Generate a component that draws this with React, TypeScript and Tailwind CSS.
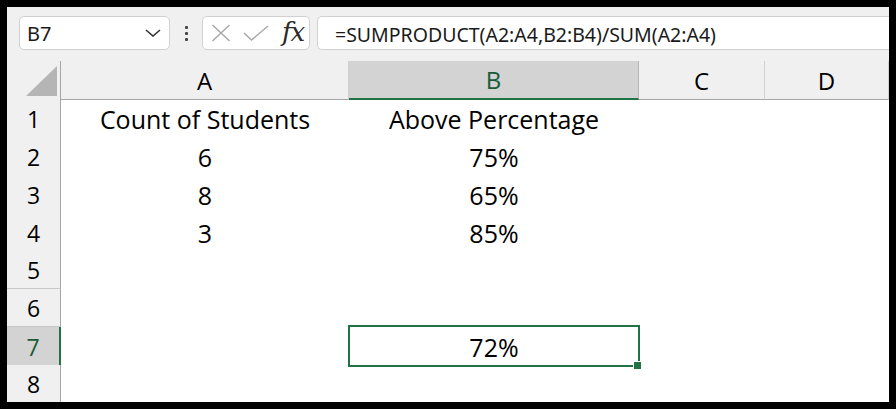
import React from "react"

const cols = ["A", "B", "C", "D"]

const rows: { a: string; b: string }[] = [
  { a: "Count of Students", b: "Above Percentage" },
  { a: "6", b: "75%" },
  { a: "8", b: "65%" },
  { a: "3", b: "85%" },
  { a: "", b: "" },
  { a: "", b: "" },
  { a: "", b: "72%" },
  { a: "", b: "" },
]

const gridCols = "grid grid-cols-[54px_288px_290px_126px_1fr]"

function Toolbar() {
  return (
    <div className="h-[54px] shrink-0 bg-[#f0f0f0] flex items-start pt-[9px] pl-[12px] gap-0 font-['Noto_Sans',sans-serif]">
      {/* name box */}
      <div className="w-[151px] h-[34px] bg-white border border-[#d1d1d1] rounded-[5px] flex items-center pl-[7px] pr-[7px] justify-between">
        <span className="text-[20px] leading-none text-[#1a1a1a] pt-[2px]">B7</span>
        <svg width="16" height="8" viewBox="0 0 16 8" className="mr-[1px]">
          <path d="M1 1 L8 7 L15 1" fill="none" stroke="#333" strokeWidth="1.6" />
        </svg>
      </div>

      {/* vertical dots */}
      <div className="w-[32px] h-[34px] flex flex-col items-center justify-center gap-[3px]">
        <span className="w-[3px] h-[3px] bg-[#444] rounded-[1px]" />
        <span className="w-[3px] h-[3px] bg-[#444] rounded-[1px]" />
        <span className="w-[3px] h-[3px] bg-[#444] rounded-[1px]" />
      </div>

      {/* cancel / enter / fx */}
      <div className="w-[108px] h-[34px] bg-white border border-[#d1d1d1] rounded-[5px] flex items-center pl-[8px]">
        <svg width="20" height="18" viewBox="0 0 20 18">
          <path d="M1.5 1 L18.5 17 M18.5 1 L1.5 17" fill="none" stroke="#a9a9a9" strokeWidth="1.5" />
        </svg>
        <svg width="26" height="16" viewBox="0 0 26 16" className="ml-[12px]">
          <path d="M1 8 L8.5 15 L25 1" fill="none" stroke="#a9a9a9" strokeWidth="1.5" />
        </svg>
        <span className="ml-[13px] text-[26px] leading-none italic text-[#2b2b2b] font-['DejaVu_Serif',serif] tracking-[-1px] -mt-[3px]">
          fx
        </span>
      </div>

      {/* formula */}
      <div className="ml-[7px] flex-1 h-[34px] bg-white border border-[#d1d1d1] border-r-0 rounded-l-[5px] flex items-center pl-[17px]">
        <span className="text-[19.5px] leading-none text-[#1a1a1a] pt-[3px]">
          =SUMPRODUCT(A2:A4,B2:B4)/SUM(A2:A4)
        </span>
      </div>
    </div>
  )
}

function HeaderRow() {
  return (
    <div className={`${gridCols} h-[38px] shrink-0 bg-[#f0f0f0]`}>
      <div className="border-r border-b border-[#a6a6a6] flex items-end justify-end pr-[3px] pb-[3px]">
        <svg width="31" height="30" viewBox="0 0 31 30">
          <polygon points="31,0 31,30 0,30" fill="#b5b5b5" />
        </svg>
      </div>
      {cols.map((c) => {
        const active = c === "B"
        return (
          <div
            key={c}
            className={
              active
                ? "bg-[#d3d3d3] border-r border-[#b5b5b5] border-b-2 border-b-[#217346] flex items-center justify-center text-[24px] text-[#185c37] pt-[1px]"
                : "border-r border-[#d0d0d0] border-b border-b-[#a6a6a6] flex items-center justify-center text-[24px] text-black pt-[1px]"
            }
          >
            {c}
          </div>
        )
      })}
    </div>
  )
}

export default function App() {
  return (
    <div className="w-[896px] h-[409px] bg-black p-[7px]">
      <div className="w-full h-full flex flex-col overflow-hidden bg-white font-['Open_Sans',sans-serif]">
        <Toolbar />
        <HeaderRow />
        {rows.map((r, i) => {
          const n = i + 1
          const active = n === 7
          return (
            <div key={n} className={`${gridCols} h-[38px] shrink-0`}>
              <div
                className={
                  active
                    ? "bg-[#d3d3d3] border-r-2 border-r-[#217346] border-b border-b-[#bdbdbd] flex items-center justify-center text-[23px] text-[#185c37] pt-[2px]"
                    : "bg-[#f0f0f0] border-r border-r-[#a6a6a6] border-b border-b-[#c8c8c8] flex items-center justify-center text-[23px] text-black pt-[2px]"
                }
              >
                {n}
              </div>
              <div className="flex items-center justify-center text-[25px] text-black pt-[2px]">{r.a}</div>
              <div className="relative flex items-center justify-center text-[25px] text-black pt-[2px]">
                {r.b}
                {active && (
                  <>
                    <div className="absolute -top-[2px] -left-[1px] -right-[1px] bottom-0 border-2 border-[#217346]" />
                    <div className="absolute -right-[2px] -bottom-[2px] w-[7px] h-[7px] bg-[#217346] outline outline-1 outline-white" />
                  </>
                )}
              </div>
              <div />
              <div />
            </div>
          )
        })}
      </div>
    </div>
  )
}
